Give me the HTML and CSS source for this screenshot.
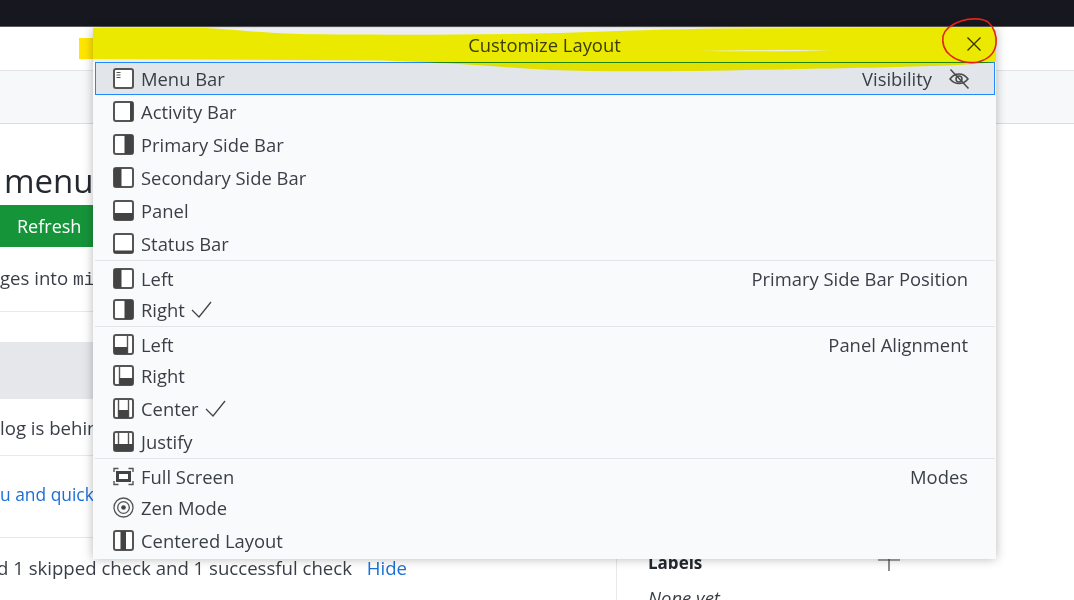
FILE: index.html
```html
<!DOCTYPE html>
<html lang="en">
<head>
<meta charset="utf-8">
<title>Customize Layout</title>
<link rel="stylesheet" href="styles.css">
</head>
<body>
<svg class="defs" width="0" height="0" aria-hidden="true">
  <symbol id="i-menu" viewBox="0 0 21 21"><rect class="fr" x="1" y="1" width="19" height="19" rx="2"/><path class="ln" d="M3.500 4.500h4M3.500 7h4M3.500 9.500h4"/></symbol>
  <symbol id="i-activity" viewBox="0 0 21 21"><rect class="fr" x="1" y="1" width="19" height="19" rx="2"/><rect class="dk" x="17" y="1" width="3" height="19"/></symbol>
  <symbol id="i-primary" viewBox="0 0 21 21"><rect class="fr" x="1" y="1" width="19" height="19" rx="2"/><rect class="dk" x="11.500" y="1" width="8.500" height="19"/></symbol>
  <symbol id="i-secondary" viewBox="0 0 21 21"><rect class="fr" x="1" y="1" width="19" height="19" rx="2"/><rect class="dk" x="1" y="1" width="7.500" height="19"/></symbol>
  <symbol id="i-panel" viewBox="0 0 21 21"><rect class="fr" x="1" y="1" width="19" height="19" rx="2"/><rect class="dk" x="1" y="13" width="19" height="7"/></symbol>
  <symbol id="i-status" viewBox="0 0 21 21"><rect class="fr" x="1" y="1" width="19" height="19" rx="2"/><rect class="dk" x="1" y="17.500" width="19" height="2.500"/></symbol>
  <symbol id="i-al-left" viewBox="0 0 21 21"><rect class="fr" x="1" y="1" width="19" height="19" rx="2"/><path class="thin" d="M14.500 1v19"/><rect class="dk" x="1" y="13" width="13.500" height="7"/></symbol>
  <symbol id="i-al-right" viewBox="0 0 21 21"><rect class="fr" x="1" y="1" width="19" height="19" rx="2"/><path class="thin" d="M6.500 1v19"/><rect class="dk" x="6.500" y="13" width="13.500" height="7"/></symbol>
  <symbol id="i-al-center" viewBox="0 0 21 21"><rect class="fr" x="1" y="1" width="19" height="19" rx="2"/><path class="thin" d="M5.500 1v19M15.500 1v19"/><rect class="dk" x="5.500" y="12" width="10" height="8"/></symbol>
  <symbol id="i-al-justify" viewBox="0 0 21 21"><rect class="fr" x="1" y="1" width="19" height="19" rx="2"/><path class="thin" d="M5.500 1v12M15.500 1v12"/><rect class="dk" x="1" y="13" width="19" height="7"/></symbol>
  <symbol id="i-full" viewBox="0 0 21 21"><path class="thin" d="M1 6V2.500h4.500M15.500 2.500H20V6M20 15v3.500h-4.500M5.500 18.500H1V15"/><rect class="thick" x="4.500" y="6.500" width="12" height="8"/></symbol>
  <symbol id="i-zen" viewBox="0 0 21 21"><circle class="thin2" cx="10.500" cy="10.500" r="9.500"/><circle class="thin2" cx="10.500" cy="10.500" r="5.800"/><circle class="dkc" cx="10.500" cy="10.500" r="2.300"/></symbol>
  <symbol id="i-centered" viewBox="0 0 21 21"><rect class="fr" x="1" y="1" width="19" height="19" rx="2"/><rect class="dk" x="7.500" y="1" width="5.500" height="19"/></symbol>
</svg>

<div class="page">
  <div class="topbar"></div>
  <div class="nav"></div>
  <div class="tabs"></div>
  <div class="main">
    <div class="content">
      <h1 class="title">menu</h1>
      <div class="refresh">Refresh</div>
      <p class="line line-merge">ges into <code>mi</code></p>
      <div class="band"></div>
      <p class="line line-log">log is behin</p>
      <p class="line line-quick"><a href="#">u and quick</a></p>
      <p class="line line-checks">d 1 skipped check and 1 successful check <a class="hide" href="#">Hide</a></p>
    </div>
    <aside class="sidebar">
      <div class="side-head"><strong>Labels</strong>
        <svg class="plus" width="22" height="22" viewBox="0 0 22 22"><path d="M0 11h22M11 0v22"/></svg>
      </div>
      <p class="none">None yet</p>
    </aside>
  </div>

  <section class="picker">
    <header class="picker-title">
      <span>Customize Layout</span>
      <svg class="close" width="16" height="16" viewBox="0 0 16 16"><path d="M1.500 1.500l13 13M14.500 1.500l-13 13"/></svg>
    </header>
    <div class="group">
      <div class="row focus"><svg class="ic"><use href="#i-menu"/></svg><span>Menu Bar</span><span class="side">Visibility</span>
        <svg class="eye" width="22" height="22" viewBox="0 0 22 22"><path d="M2 11c2.500-3.500 5.500-5 9-5s6.500 1.500 9 5c-2.500 3-5.500 4.500-9 4.500S4.500 14 2 11z"/><circle cx="11" cy="11" r="3"/><path d="M2.500 1.500l18 19"/></svg>
      </div>
      <div class="row"><svg class="ic"><use href="#i-activity"/></svg><span>Activity Bar</span></div>
      <div class="row"><svg class="ic"><use href="#i-primary"/></svg><span>Primary Side Bar</span></div>
      <div class="row"><svg class="ic"><use href="#i-secondary"/></svg><span>Secondary Side Bar</span></div>
      <div class="row"><svg class="ic"><use href="#i-panel"/></svg><span>Panel</span></div>
      <div class="row"><svg class="ic"><use href="#i-status"/></svg><span>Status Bar</span></div>
    </div>
    <div class="group sep">
      <div class="row"><svg class="ic"><use href="#i-secondary"/></svg><span>Left</span><span class="side">Primary Side Bar Position</span></div>
      <div class="row short"><svg class="ic"><use href="#i-primary"/></svg><span>Right</span>
        <svg class="check" width="21" height="19" viewBox="0 0 21 19"><path d="M1 10l7 7L20 2"/></svg></div>
    </div>
    <div class="group sep">
      <div class="row"><svg class="ic"><use href="#i-al-left"/></svg><span>Left</span><span class="side">Panel Alignment</span></div>
      <div class="row short"><svg class="ic"><use href="#i-al-right"/></svg><span>Right</span></div>
      <div class="row"><svg class="ic"><use href="#i-al-center"/></svg><span>Center</span>
        <svg class="check" width="21" height="19" viewBox="0 0 21 19"><path d="M1 10l7 7L20 2"/></svg></div>
      <div class="row"><svg class="ic"><use href="#i-al-justify"/></svg><span>Justify</span></div>
    </div>
    <div class="group sep">
      <div class="row"><svg class="ic"><use href="#i-full"/></svg><span>Full Screen</span><span class="side">Modes</span></div>
      <div class="row short"><svg class="ic"><use href="#i-zen"/></svg><span>Zen Mode</span></div>
      <div class="row"><svg class="ic"><use href="#i-centered"/></svg><span>Centered Layout</span></div>
    </div>
  </section>

  <svg class="marker" width="1074" height="80" viewBox="0 0 1074 80" aria-hidden="true">
    <path class="marker-patch" d="M79 38h15v21H79z"/>
    <path class="marker-ink" d="M93 28L205 28C240 30 265 33 300 34C370 35 480 35 560 33C620 31 670 29 720 28.500L990 27.500Q996 28 996 32L996 62Q975 64 950 65.500C900 67 860 68 800 69C700 71 620 72.500 550 70C500 67 440 62 380 60.500L93 59z"/>
    <path class="marker-gap" d="M697 51C740 50 790 50 833 50C790 51.500 740 51.500 697 51z"/>
  </svg>
  <svg class="circle" width="62" height="50" viewBox="0 0 62 50" aria-hidden="true">
    <path d="M21 4C30 1 42 1 48 5C54 10 57 19 56 27C55 35 49 42 38 45C28 47 17 44 10 38C4 33 2 26 3 19C5 12 12 7 21 4z"/>
  </svg>
</div>
</body>
</html>
```
FILE: styles.css
```css
* { box-sizing: border-box; }
html, body { margin: 0; padding: 0; }
body {
  font-family: "Open Sans", "Noto Sans", "Liberation Sans", sans-serif;
  color: #3a3f47;
  background: #fff;
}
.defs { position: absolute; }
.page { position: relative; width: 1074px; height: 600px; overflow: hidden; background: #fff; }

.topbar { height: 27px; background: #17171f; border-bottom: 1px solid #5a5a5e; }
.nav { height: 44px; background: #fff; border-bottom: 1px solid #e1e4e8; }
.tabs { height: 53px; background: #f6f8fa; border-bottom: 1px solid #d8dee4; }

.main { display: grid; grid-template-columns: 616px 1fr; }
.content { min-width: 0; overflow: hidden; }
.title { margin: 0; height: 81px; padding: 34px 0 0 4px; font-size: 33px; line-height: 46px; font-weight: 400; color: #24292f; }
.refresh { height: 42px; background: #16943a; color: #fff; font-size: 18px; line-height: 42px; padding-left: 17px; font-weight: 500; }
.line { margin: 0; font-size: 18.600px; white-space: nowrap; }
.line code { font-family: "Liberation Mono", monospace; font-size: 18px; }
.line a { color: #1a6fd8; text-decoration: none; }
.line-merge { height: 65px; line-height: 62px; border-bottom: 1px solid #e6e8ec; }
.band { height: 57px; margin-top: 30px; background: #e5e7eb; }
.line-log { height: 57px; line-height: 58px; border-bottom: 1px solid #e6e8ec; }
.line-quick { height: 82px; line-height: 77px; border-bottom: 1px solid #e6e8ec; font-size: 17.400px; }
.line-checks { height: 62px; line-height: 60px; margin-left: -3px; }
.hide { margin-left: 10px; }

.sidebar { border-left: 1px solid #e6e8ec; padding: 426px 0 0 31px; }
.side-head { display: flex; align-items: center; font-size: 17px; color: #24292f; height: 24px; gap: 176px; }
.plus { stroke: #444; stroke-width: 1.200; fill: none; flex: none; margin-top: -4px; }
.none { margin: 12px 0 0; font-size: 18.500px; font-style: italic; color: #3a3f47; line-height: 24px; }

.picker {
  position: absolute; left: 93px; top: 28px; width: 903px; height: 531px;
  background: #f9fafc; box-shadow: 0 0 10px rgba(0, 0, 0, .28);
  font-size: 18.400px;
}
.picker-title { position: relative; height: 34px; background: #eceef1; display: flex; align-items: center; justify-content: center; padding-bottom: 2px; }
.close { position: absolute; right: 14px; top: 8px; stroke: #333; stroke-width: 1.300; fill: none; }

.group { margin: 0 1px 0 2px; }
.sep { border-top: 1px solid #e2e4e8; padding-top: 1px; }
.row { display: flex; align-items: center; height: 33px; padding: 0 27px 0 18px; white-space: nowrap; }
.short { height: 31px; padding-bottom: 2px; }
.focus { background: #e2e5ea; box-shadow: inset 0 0 0 1px #2188ff; }
.ic { width: 21px; height: 21px; margin-right: 7px; flex: none; }
.side { margin-left: auto; }
.eye { margin: 0 -2px 0 16px; flex: none; fill: none; stroke: #4a4a4a; stroke-width: 1.500; }
.check { margin-left: 6px; flex: none; fill: none; stroke: #444; stroke-width: 1.300; }

.fr { fill: #fff; stroke: #555; stroke-width: 2; }
.dk { fill: #434343; }
.dkc { fill: #434343; }
.ln { fill: none; stroke: #555; stroke-width: 1.200; }
.thin { fill: none; stroke: #555; stroke-width: 1.400; }
.thin2 { fill: none; stroke: #555; stroke-width: 1.300; }
.thick { fill: #fff; stroke: #434343; stroke-width: 3; }

.marker { position: absolute; left: 0; top: 0; mix-blend-mode: multiply; }
.marker-patch { fill: #ffe600; }
.marker-ink { fill: #fefa00; }
.marker-gap { fill: #fff; }
.circle { position: absolute; left: 940px; top: 17px; fill: none; stroke: #e2231a; stroke-width: 1.600; }
```
